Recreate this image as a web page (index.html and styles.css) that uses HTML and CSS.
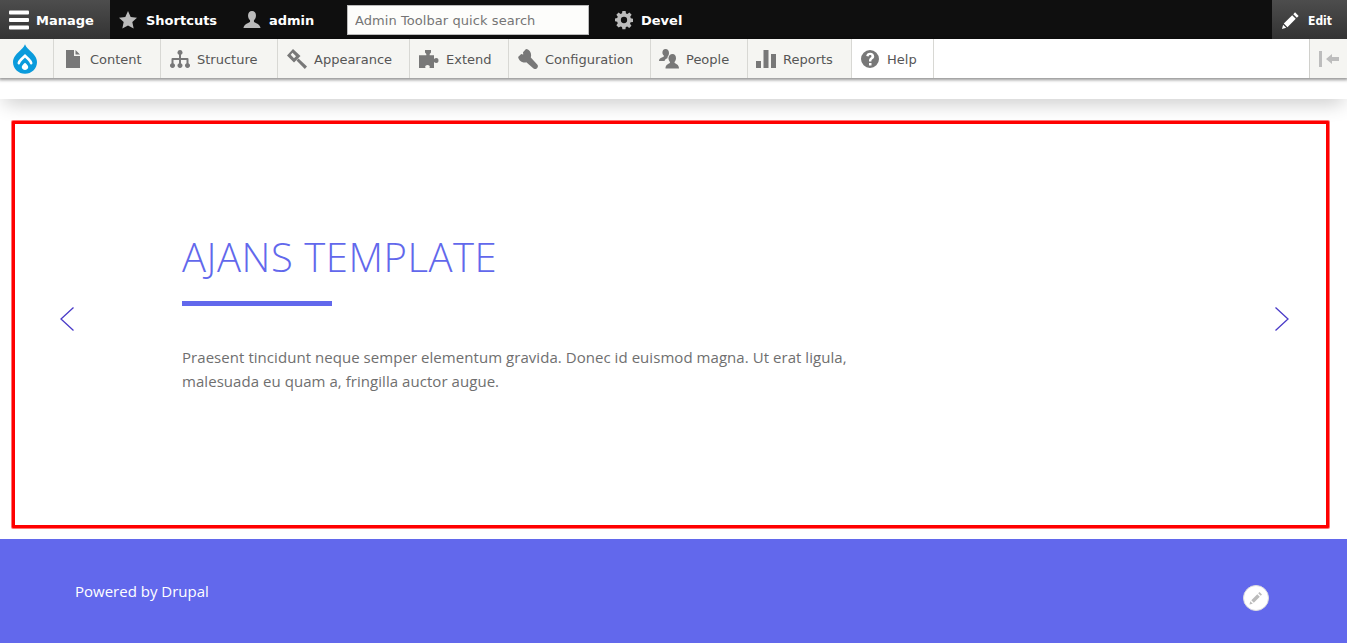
FILE: index.html
```html
<!DOCTYPE html>
<html lang="en">
<head>
<meta charset="utf-8">
<title>Ajans Template</title>
<link rel="stylesheet" href="styles.css">
</head>
<body>
<header class="toolbar">
  <nav class="bar">
    <a class="bar-item manage"><svg class="bar-icon burger" viewBox="0 0 20 20"><rect x="0" y="0.500" width="20" height="4" rx="1"/><rect x="0" y="8" width="20" height="4" rx="1"/><rect x="0" y="15.500" width="20" height="4" rx="1"/></svg><span class="label">Manage</span></a>
    <a class="bar-item shortcuts"><svg class="bar-icon" viewBox="0 0 20 20"><path d="M10 0l3 6.600 7 .9-5.200 4.800 1.500 7.200L10 16l-6.300 3.500 1.500-7.200L0 7.500l7-.9z"/></svg><span class="label">Shortcuts</span></a>
    <a class="bar-item user"><svg class="bar-icon" viewBox="0 0 20 20"><path d="M10 0c2.700 0 4.400 2.100 4.400 5 0 2.200-.9 4-2 5.100-.4.500-.4 1.500 0 2 .8.900 6.600 2.100 7.100 6.900H.5c.5-4.800 6.300-6 7.100-6.900.4-.5.400-1.500 0-2C6.500 9 5.600 7.200 5.600 5 5.600 2.100 7.300 0 10 0z"/></svg><span class="label">admin</span></a>
    <input class="search" type="text" placeholder="Admin Toolbar quick search">
    <a class="bar-item devel"><svg class="bar-icon" viewBox="0 0 20 20"><path fill-rule="evenodd" d="M8.200 0h3.600l.4 2.700 1.600.7 2.200-1.600 2.500 2.500-1.600 2.200.7 1.600 2.400.4v3.600l-2.700.4-.6 1.600 1.600 2.200-2.500 2.500-2.200-1.600-1.600.7-.4 2.500H8.200l-.4-2.600-1.600-.7L4 18.200l-2.500-2.500 1.600-2.200-.7-1.600L0 11.500V8.300l2.400-.4.700-1.600-1.600-2.200L4 1.600l2.200 1.600 1.600-.7zM10 6.500a3.500 3.500 0 1 0 0 7 3.500 3.500 0 0 0 0-7z"/></svg><span class="label">Devel</span></a>
    <a class="bar-item edit"><svg class="bar-icon" viewBox="0 0 20 20"><path d="M14.500 1.500l4 4-2 2-4-4zM11.300 4.700l4 4L6 18l-4-4zM1.200 15.200l3.500 3.500-4.700 1.300z"/></svg><span class="label">Edit</span></a>
  </nav>
  <nav class="tray">
    <a class="tab logo"><svg viewBox="0 0 26 32" width="24" height="30"><path fill="#0a9bdc" d="M13 0c1.200 3.500 4 5.700 6.600 8.100C22.600 10.900 26 14.500 26 19.500 26 26.500 20 32 13 32S0 26.500 0 19.500C0 14.500 3.400 10.900 6.400 8.100 9 5.700 11.800 3.500 13 0z"/><path fill="none" stroke="#fff" stroke-width="2.800" stroke-linecap="round" d="M6.300 20.500c.5-1.800 1.600-3 2.800-4.200L13 12.500l3.900 3.800c1.200 1.200 2.300 2.400 2.800 4.200"/><path fill="#fff" d="M13 20c1.800 1.600 3.500 3 3.500 4.800S14.900 28 13 28s-3.500-1.400-3.500-3.200S11.200 21.600 13 20z"/></svg></a>
    <a class="tab t-content"><svg class="tab-icon" viewBox="0 0 20 18"><path d="M3 0h8v6h6v12H3zM12.500 0L17 4.500h-4.500z"/></svg><span class="label">Content</span></a>
    <a class="tab t-structure"><svg class="tab-icon" viewBox="0 0 20 18"><path d="M10 0a2.500 2.500 0 0 1 1 4.800V8h6.500a1 1 0 0 1 1 1v4.200a2.500 2.500 0 1 1-2 0V10H11v3.200a2.500 2.500 0 1 1-2 0V10H3.500v3.200a2.500 2.500 0 1 1-2 0V9a1 1 0 0 1 1-1H9V4.800A2.500 2.500 0 0 1 10 0z"/></svg><span class="label">Structure</span></a>
    <a class="tab t-appearance"><svg class="tab-icon tall" viewBox="0 0 20 20"><path fill-rule="evenodd" d="M6 0l7.500 7-6.500 6.500L0 6.500zM5.500 3.800L3.700 5.800l3.300 3.400 2-2z"/><path d="M11.500 9.500l8.500 8-2.200 2.500-8.300-8.500z"/></svg><span class="label">Appearance</span></a>
    <a class="tab t-extend"><svg class="tab-icon" viewBox="0 0 20 18"><path d="M6 0h6v2.500L10.700 4v1.200H15V9c1.500-1.500 4.500-1.500 4.500 1.500S16.500 13.500 15 12v6h-4.500c1-2-.5-3-2-3s-3 1-2 3H0v-12.800h7.300V4L6 2.500z"/></svg><span class="label">Extend</span></a>
    <a class="tab t-config"><svg class="tab-icon tall" viewBox="0 0 20 20"><path d="M8 .1L5 3.200l.3 2.500 2.500.3-1 .1L3.200 5 .1 8c.3 2.500 2.400 5 5.400 5.500 1 .2 2 0 2.800-.3l7.200 6.300c1 .8 2.500.8 3.500-.2 1.200-1.100 1.200-2.800.2-3.800l-6.400-7c1-3.500-.3-7.500-4.800-8.400z"/></svg><span class="label">Configuration</span></a>
    <a class="tab t-people tight"><svg class="tab-icon tall" viewBox="0 0 20 20"><path d="M6.500 0C9 0 10 2 10 4c0 1.600-.7 3-1.400 3.700-.3.400-.2 1 .1 1.400-1.200.5-2.500 1.200-3.200 2.800H0c0-3 4.300-3.500 4.800-4.300.2-.3.200-.7 0-1C4 5.900 3.400 5 3.400 3.800 3.400 1.700 4.500 0 6.500 0zM13.500 5c2.300 0 3.500 2 3.500 4.200 0 1.500-.6 2.800-1.300 3.500-.3.400-.3 1 0 1.400.6.600 4.300 1.400 4.300 5.400H6.500c0-4 3.700-4.800 4.300-5.400.3-.4.300-1 0-1.400-.7-.7-1.300-2-1.300-3.500C9.500 7 11.200 5 13.500 5z"/></svg><span class="label">People</span></a>
    <a class="tab t-reports tight"><svg class="tab-icon" viewBox="0 0 20 18"><path d="M0 11h5v7H0zM7.500 0h5v18h-5zM15 4h5v14h-5z"/></svg><span class="label">Reports</span></a>
    <a class="tab t-help tight"><svg class="tab-icon" viewBox="0 0 20 18"><path fill-rule="evenodd" d="M10 0a9 9 0 1 1 0 18 9 9 0 0 1 0-18zM9 13v2.500h2.500V13zM10.200 2.800c-2.200 0-3.800 1.200-4 3.300l2.400.4c.1-1 .7-1.500 1.500-1.500s1.400.5 1.400 1.200c0 .6-.4 1-1.100 1.500C9.600 8.400 9 9.200 9 10.500v1h2.400v-.7c0-.7.300-1 1-1.500 1-.7 1.800-1.500 1.800-2.900 0-2-1.600-3.600-4-3.600z"/></svg><span class="label">Help</span></a>
    <a class="toggle"><svg viewBox="0 0 20 16" width="20" height="16"><path d="M0 0h3v16H0zM7 8l6-5v3h7v4h-7v3z"/></svg></a>
  </nav>
</header>
<div class="page-head"></div>
<main class="carousel">
  <div class="slide">
    <h1 class="slide-title">AJANS TEMPLATE</h1>
    <div class="slide-rule"></div>
    <p class="slide-text">Praesent tincidunt neque semper elementum gravida. Donec id euismod magna. Ut erat ligula, malesuada eu quam a, fringilla auctor augue.</p>
  </div>
  <svg class="arrow prev" viewBox="0 0 14 24"><path d="M13.500.5L1 12l12.500 11.500"/></svg>
  <svg class="arrow next" viewBox="0 0 14 24"><path d="M.5.500L13 12 .5 23.500"/></svg>
</main>
<footer class="footer">
  <p class="powered">Powered by Drupal</p>
  <a class="pencil"><svg viewBox="0 0 16 16" width="16" height="16"><path d="M11.500 2l2.500 2.500-1.300 1.300-2.500-2.500zM9.300 4.200l2.500 2.500-6 6-2.500-2.500zM2.300 11.200l2.500 2.500L1.500 14.500z"/></svg></a>
</footer>
</body>
</html>
```
FILE: styles.css
```css
* { box-sizing: border-box; }
html, body { margin: 0; padding: 0; }
body { background: #fff; font-family: "Open Sans", sans-serif; height: 643px; overflow: hidden; }
a { text-decoration: none; color: inherit; display: flex; align-items: center; }
.label { padding-top: 2px; }

.toolbar { font-family: "DejaVu Sans", sans-serif; font-size: 13px; position: relative; z-index: 2; }
.bar { height: 39px; background: #0f0f0f; display: flex; align-items: center; color: #fff; font-weight: bold; }
.bar-item { height: 39px; }
.bar-icon { width: 18px; height: 20px; fill: #bbb; margin-right: 9px; flex: none; }
.manage { width: 110px; padding-left: 9px; background: linear-gradient(to bottom, #4d4d4d, #333); }
.burger { width: 20px; fill: #fff; margin-right: 7px; }
.shortcuts { margin-left: 9px; width: 124px; }
.user { width: 104px; }
.user .bar-icon { margin-right: 8px; }
.search { width: 242px; height: 30px; border: 1px solid #bbb; background: #fdfdfb; padding: 2px 7px 0; font: 13px "DejaVu Sans", sans-serif; letter-spacing: .07px; }
.search::placeholder { color: #757575; opacity: 1; }
.devel { margin-left: 26px; }
.devel .bar-icon { margin-right: 8px; }
.edit { margin-left: auto; width: 75px; padding-left: 10px; background: linear-gradient(to bottom, #4d4d4d, #333); font-family: "DejaVu Sans Condensed", "DejaVu Sans", sans-serif; font-stretch: condensed; font-size: 12px; }
.edit .bar-icon { fill: #fff; margin-right: 8px; }

.tray { height: 39px; background: #fff; display: flex; color: #565656; box-shadow: 0 1px 3px 1px rgba(0,0,0,.42); }
.tab { background: #f5f5f2; border-right: 1px solid #d8d8d4; padding-left: 9px; white-space: nowrap; height: 39px; }
.tight { padding-left: 8px; }
.logo { width: 54px; padding: 0 3px 0 0; justify-content: center; }
.tab-icon { width: 20px; height: 18px; fill: #787878; margin-right: 7px; flex: none; }
.tab-icon.tall { height: 20px; }
.t-content { width: 107px; }
.t-structure { width: 117px; }
.t-appearance { width: 132px; }
.t-extend { width: 99px; }
.t-config { width: 142px; }
.t-people { width: 97px; }
.t-reports { width: 104px; }
.t-help { width: 82px; background: #fff; }
.toggle { margin-left: auto; width: 38px; background: #f5f5f2; border-left: 1px solid #d0d0cc; justify-content: center; fill: #bdbdbd; }

.page-head { height: 21px; background: #fff; box-shadow: 0 6px 20px -4px rgba(0,0,0,.3); position: relative; z-index: 1; }

.carousel { position: relative; margin: 22px 18px 0 12px; height: 407px; border: 3px solid #f00; border-radius: 1px; box-shadow: 0 0 0 1px rgba(255,0,0,.55); background: #fff; padding: 106px 167px 0; }
.slide-title { margin: 0; font-weight: 300; font-size: 40px; line-height: 54px; color: #6268ec; letter-spacing: .55px; white-space: nowrap; }
.slide-rule { width: 150px; height: 5px; background: #6268ec; margin-top: 17px; }
.slide-text { margin: 39px 0 0; width: 680px; font-size: 15px; line-height: 24px; color: #6f6f6f; letter-spacing: .05px; }
.arrow { position: absolute; top: 183px; width: 14px; height: 24px; fill: none; stroke: #4a3bc8; stroke-width: 1.3; }
.prev { left: 45px; }
.next { right: 37px; }

.footer { margin-top: 11px; height: 104px; background: #6268ec; color: #fff; display: flex; justify-content: space-between; padding: 0 78px 0 75px; }
.powered { margin: 40px 0 0; font-size: 15px; line-height: 24px; }
.pencil { width: 26px; height: 26px; border-radius: 50%; background: #fff; margin-top: 46px; justify-content: center; fill: #bbb; border: 1px solid #ddd; }
```
